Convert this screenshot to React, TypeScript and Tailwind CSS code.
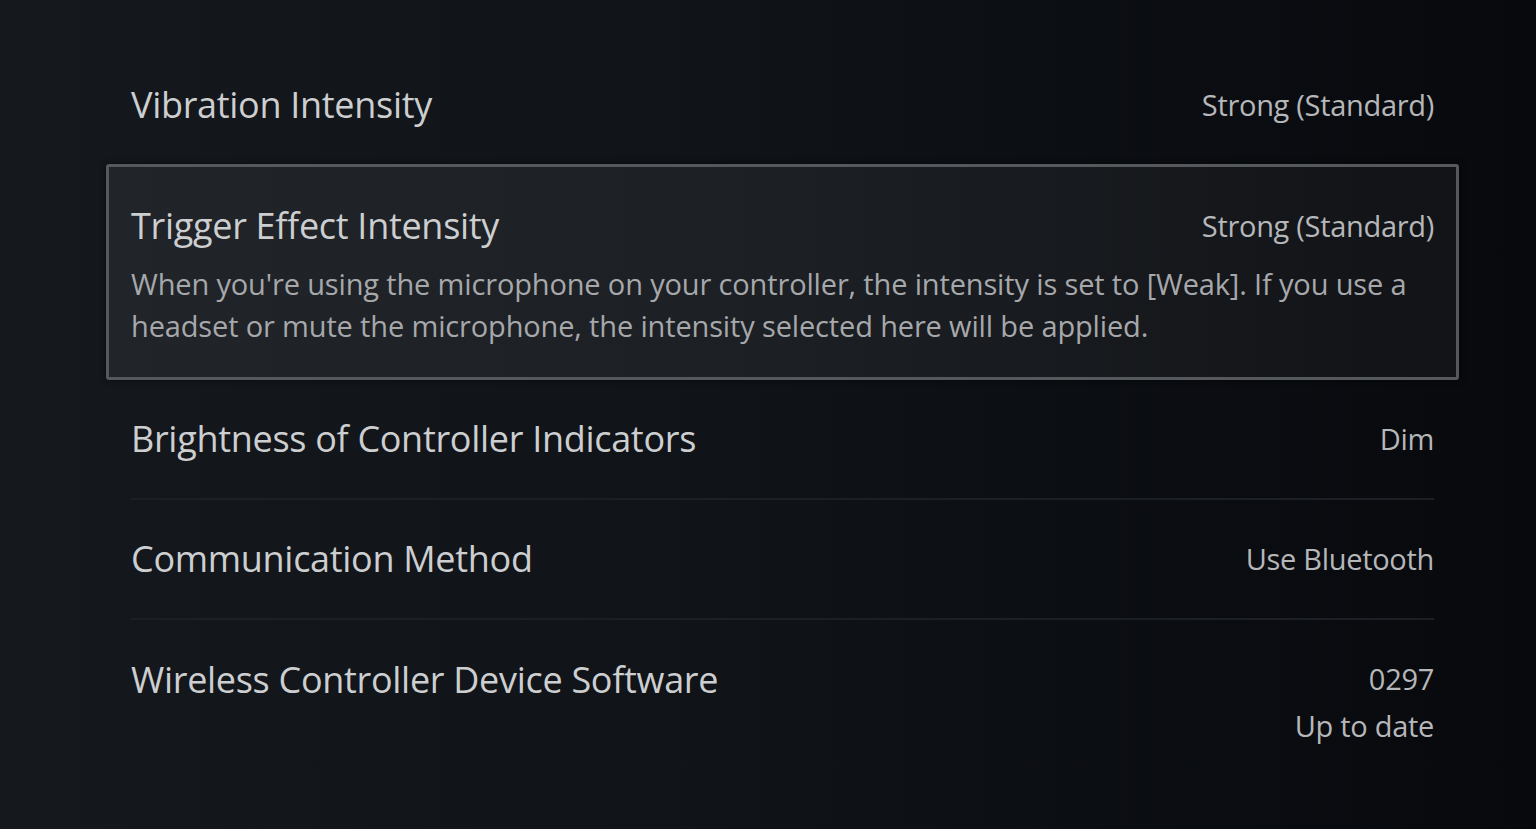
export default function App() {
  const font = { fontFamily: '"Open Sans", "Noto Sans", sans-serif' }
  return (
    <div
      className="w-[1536px] h-[829px] overflow-hidden bg-[linear-gradient(90deg,#15181d_0%,#101318_45%,#07090d_100%)] text-[#d2d3d5]"
      style={font}
    >
      <div className="pt-[45px] pl-[131px] pr-[102px]">
        {/* Vibration Intensity */}
        <div className="h-[119px] flex items-center justify-between">
          <span className="text-[36px] tracking-[-0.3px] text-[#cdced0]">Vibration Intensity</span>
          <span className="text-[29px] tracking-[-0.3px] text-[#b6b7b9]">Strong (Standard)</span>
        </div>

        {/* focused row */}
        <div className="-mx-[25px] h-[216px] rounded-[3px] border-[3px] border-[#55585d] bg-[linear-gradient(90deg,#212428_0%,#1c1f23_50%,#111317_100%)] px-[22px] pt-[34px] shadow-[0_0_6px_rgba(0,0,0,0.6)]">
          <div className="flex items-center justify-between h-[50px]">
            <span className="text-[36px] tracking-[-0.3px] text-[#cdced0]">Trigger Effect Intensity</span>
            <span className="text-[29px] tracking-[-0.3px] text-[#b6b7b9]">Strong (Standard)</span>
          </div>
          <p className="mt-[12px] text-[29px] leading-[42px] tracking-[-0.15px] text-[#a6a8ab] pr-[20px]">
            When you're using the microphone on your controller, the intensity is set to [Weak]. If you use a headset or mute the microphone, the intensity selected here will be applied.
          </p>
        </div>

        <div className="h-[120px] flex items-center justify-between border-b-2 border-[#1c1f23]">
          <span className="text-[36px] tracking-[-0.3px] text-[#cdced0]">Brightness of Controller Indicators</span>
          <span className="text-[29px] tracking-[-0.3px] text-[#b6b7b9]">Dim</span>
        </div>

        <div className="h-[120px] flex items-center justify-between border-b-2 border-[#1c1f23]">
          <span className="text-[36px] tracking-[-0.3px] text-[#cdced0]">Communication Method</span>
          <span className="text-[29px] tracking-[-0.3px] text-[#b6b7b9]">Use Bluetooth</span>
        </div>

        <div className="pt-[35px] flex items-start justify-between">
          <span className="text-[36px] leading-[50px] tracking-[-0.3px] text-[#cdced0]">Wireless Controller Device Software</span>
          <div className="flex flex-col items-end text-[29px] leading-[47px] tracking-[-0.3px] text-[#b6b7b9]">
            <span>0297</span>
            <span>Up to date</span>
          </div>
        </div>
      </div>
    </div>
  )
}
